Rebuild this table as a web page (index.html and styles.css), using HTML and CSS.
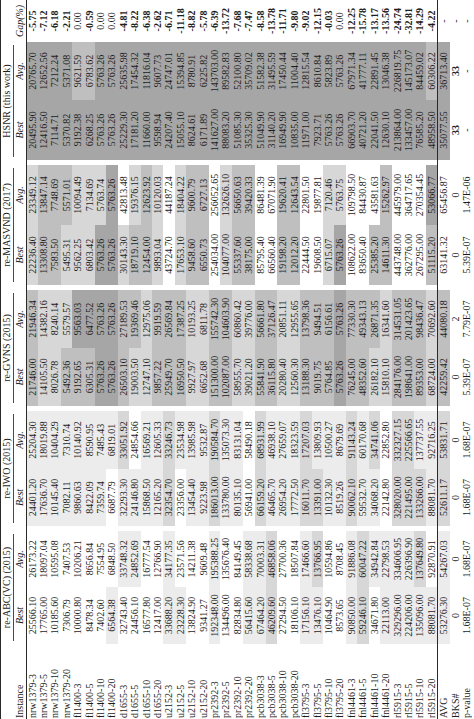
FILE: index.html
```html
<!DOCTYPE html>
<html lang="en">
<head>
<meta charset="utf-8">
<title>HSNR results table</title>
<link rel="stylesheet" href="styles.css">
</head>
<body>
<div class="page">
<div class="sheet">
<table class="res">
<colgroup>
<col class="w-inst"><col class="w57"><col class="w56"><col class="w62"><col class="w58"><col class="w63"><col class="w58"><col class="w65"><col class="w60"><col class="w65"><col class="w58"><col class="w42">
</colgroup>
<thead>
<tr class="h1"><th></th><th colspan="2"><div class="grp">re-ABC(VC) (2015)</div></th><th colspan="2" class="gs"><div class="grp">re-IWO (2015)</div></th><th colspan="2" class="gs"><div class="grp">re-GVNS (2015)</div></th><th colspan="2" class="gs"><div class="grp">re-MASVND (2017)</div></th><th colspan="2" class="gs"><div class="grp">HSNR (this work)</div></th><th></th></tr>
<tr class="h2"><th class="inst">Instance</th><th><i>Best</i></th><th><i>Avg.</i></th><th><i>Best</i></th><th><i>Avg.</i></th><th><i>Best</i></th><th><i>Avg.</i></th><th><i>Best</i></th><th><i>Avg.</i></th><th><i>Best</i></th><th><i>Avg.</i></th><th><i>Gap(%)</i></th></tr>
<tr class="rule"><td colspan="12"></td></tr>
</thead>
<tbody>
<tr class="rk"><td>nrw1379-3</td><td>25566.10</td><td>26173.22</td><td>24401.20</td><td>25204.30</td><td>21746.00</td><td>21946.34</td><td>22236.40</td><td>23349.12</td><td>20495.90</td><td>20765.70</td><td><b>-5.75</b></td></tr>
<tr class="rk"><td>nrw1379-5</td><td>17765.00</td><td>18097.04</td><td>17636.70</td><td>18019.88</td><td>14105.50</td><td>14382.16</td><td>13308.80</td><td>13847.14</td><td>12416.50</td><td>12652.56</td><td><b>-7.12</b></td></tr>
<tr class="rk"><td>nrw1379-10</td><td>10185.60</td><td>10595.08</td><td>10145.40</td><td>10404.29</td><td>8026.78</td><td>8240.14</td><td>7583.50</td><td>7748.69</td><td>7114.71</td><td>7212.24</td><td><b>-6.18</b></td></tr>
<tr class="rk"><td>nrw1379-20</td><td>7306.79</td><td>7407.53</td><td>7082.11</td><td>7310.74</td><td>5492.36</td><td>5579.57</td><td>5495.31</td><td>5571.01</td><td>5370.82</td><td>5371.08</td><td><b>-2.21</b></td></tr>
<tr class="rk"><td>fl1400-3</td><td>10000.80</td><td>10206.21</td><td>9860.63</td><td>10140.92</td><td>9192.65</td><td>9563.03</td><td>9562.25</td><td>10094.49</td><td>9192.38</td><td>9621.59</td><td>0.00</td></tr>
<tr class="rk"><td>fl1400-5</td><td>8478.34</td><td>8656.84</td><td>8422.09</td><td>8590.95</td><td>6305.31</td><td>6477.52</td><td>6803.42</td><td>7134.69</td><td>6268.25</td><td>6783.62</td><td><b>-0.59</b></td></tr>
<tr class="rk"><td>fl1400-10</td><td>7402.60</td><td>7554.95</td><td>7359.74</td><td>7485.43</td><td>5763.26</td><td>5763.26</td><td>5763.26</td><td>5763.74</td><td>5763.26</td><td>5763.26</td><td>0.00</td></tr>
<tr class="rk"><td>fl1400-20</td><td>6564.38</td><td>6848.50</td><td>6687.79</td><td>6819.01</td><td>5763.26</td><td>5763.26</td><td>5763.26</td><td>5763.26</td><td>5763.26</td><td>5763.26</td><td>0.00</td></tr>
<tr class="rk"><td>d1655-3</td><td>32743.40</td><td>33748.32</td><td>32293.30</td><td>33051.92</td><td>26503.10</td><td>27189.53</td><td>30143.30</td><td>42813.48</td><td>25229.30</td><td>25635.98</td><td><b>-4.81</b></td></tr>
<tr class="rk"><td>d1655-5</td><td>24456.10</td><td>24852.69</td><td>24146.80</td><td>24854.66</td><td>19003.50</td><td>19369.46</td><td>18719.10</td><td>19376.15</td><td>17181.20</td><td>17454.32</td><td><b>-8.22</b></td></tr>
<tr class="rk"><td>d1655-10</td><td>16577.80</td><td>16777.54</td><td>15868.50</td><td>16569.21</td><td>12747.10</td><td>12975.06</td><td>12454.00</td><td>12623.92</td><td>11660.00</td><td>11816.04</td><td><b>-6.38</b></td></tr>
<tr class="rk"><td>d1655-20</td><td>12417.00</td><td>12766.90</td><td>12165.20</td><td>12605.33</td><td>9857.22</td><td>9919.59</td><td>9893.04</td><td>10120.03</td><td>9598.94</td><td>9607.73</td><td><b>-2.62</b></td></tr>
<tr class="rk"><td>u2152-3</td><td>33688.20</td><td>34177.35</td><td>32354.70</td><td>33246.73</td><td>25949.70</td><td>26569.84</td><td>43724.70</td><td>44187.24</td><td>24207.40</td><td>24747.01</td><td><b>-6.71</b></td></tr>
<tr class="rk"><td>u2152-5</td><td>23228.30</td><td>23571.56</td><td>23356.00</td><td>23534.98</td><td>16950.50</td><td>17387.25</td><td>17653.10</td><td>18404.22</td><td>15055.10</td><td>15394.85</td><td><b>-11.18</b></td></tr>
<tr class="rk"><td>u2152-10</td><td>13824.90</td><td>14211.38</td><td>13454.40</td><td>13985.98</td><td>9927.97</td><td>10193.25</td><td>9458.60</td><td>9600.79</td><td>8624.61</td><td>8780.91</td><td><b>-8.82</b></td></tr>
<tr class="rk"><td>u2152-20</td><td>9341.27</td><td>9609.48</td><td>9223.98</td><td>9532.87</td><td>6652.68</td><td>6811.78</td><td>6550.73</td><td>6727.13</td><td>6171.89</td><td>6225.82</td><td><b>-5.78</b></td></tr>
<tr class="rk"><td>pr2392-3</td><td>192348.00</td><td>195388.25</td><td>186013.00</td><td>190584.70</td><td>151300.00</td><td>155742.30</td><td>254034.00</td><td>256052.65</td><td>141627.00</td><td>143703.00</td><td><b>-6.39</b></td></tr>
<tr class="rk"><td>pr2392-5</td><td>134496.00</td><td>135676.40</td><td>133780.00</td><td>135073.30</td><td>102087.00</td><td>104603.90</td><td>104077.00</td><td>132626.10</td><td>88083.20</td><td>89582.83</td><td><b>-13.72</b></td></tr>
<tr class="rk"><td>pr2392-10</td><td>82834.80</td><td>84149.45</td><td>80135.10</td><td>83131.04</td><td>58955.70</td><td>60860.42</td><td>55337.60</td><td>56650.63</td><td>51085.30</td><td>52100.80</td><td><b>-7.68</b></td></tr>
<tr class="rk"><td>pr2392-20</td><td>56415.60</td><td>58338.68</td><td>56941.00</td><td>58490.18</td><td>39021.20</td><td>39776.00</td><td>38175.00</td><td>39420.33</td><td>35325.30</td><td>35709.02</td><td><b>-7.47</b></td></tr>
<tr class="rk"><td>pcb3038-3</td><td>67464.20</td><td>70003.31</td><td>66159.20</td><td>68931.99</td><td>55841.90</td><td>56661.80</td><td>85795.40</td><td>86481.39</td><td>51049.90</td><td>51582.38</td><td><b>-8.58</b></td></tr>
<tr class="rk"><td>pcb3038-5</td><td>46209.60</td><td>46858.06</td><td>46465.70</td><td>46938.10</td><td>36115.80</td><td>37126.47</td><td>66560.40</td><td>67071.90</td><td>31140.20</td><td>31495.59</td><td><b>-13.78</b></td></tr>
<tr class="rk"><td>pcb3038-10</td><td>27294.50</td><td>27700.36</td><td>26954.20</td><td>27659.07</td><td>20280.40</td><td>20851.11</td><td>19198.20</td><td>19620.41</td><td>16949.90</td><td>17450.44</td><td><b>-11.71</b></td></tr>
<tr class="rk"><td>pcb3038-20</td><td>18106.10</td><td>18507.84</td><td>17772.50</td><td>18323.59</td><td>12560.30</td><td>12955.65</td><td>12012.20</td><td>12643.54</td><td>10835.00</td><td>11004.40</td><td><b>-9.80</b></td></tr>
<tr class="rk"><td>fl3795-3</td><td>17156.10</td><td>17466.60</td><td>16011.70</td><td>17207.03</td><td>13188.30</td><td>13798.36</td><td>22444.50</td><td>22801.50</td><td>11971.00</td><td>12815.54</td><td><b>-9.02</b></td></tr>
<tr class="rk"><td>fl3795-5</td><td>13476.10</td><td>13766.95</td><td>13391.00</td><td>13809.93</td><td>9019.75</td><td>9494.51</td><td>19608.50</td><td>19877.81</td><td>7923.71</td><td>8610.84</td><td><b>-12.15</b></td></tr>
<tr class="rk"><td>fl3795-10</td><td>10464.90</td><td>10594.86</td><td>10132.30</td><td>10500.27</td><td>5764.85</td><td>6156.61</td><td>6715.07</td><td>7120.46</td><td>5763.26</td><td>5823.89</td><td><b>-0.03</b></td></tr>
<tr class="rk"><td>fl3795-20</td><td>8573.65</td><td>8708.45</td><td>8519.26</td><td>8679.69</td><td>5763.26</td><td>5763.26</td><td>5763.26</td><td>5763.75</td><td>5763.26</td><td>5763.26</td><td>0.00</td></tr>
<tr class="rk"><td>fnl4461-3</td><td>90850.00</td><td>91886.08</td><td>90062.10</td><td>91143.24</td><td>76245.00</td><td>77330.30</td><td>108622.00</td><td>109798.50</td><td>66903.70</td><td>67971.34</td><td><b>-12.25</b></td></tr>
<tr class="rk"><td>fnl4461-5</td><td>59246.10</td><td>60047.22</td><td>59532.70</td><td>60170.68</td><td>48352.60</td><td>49343.13</td><td>83650.40</td><td>84430.87</td><td>40721.20</td><td>41777.11</td><td><b>-15.78</b></td></tr>
<tr class="rk"><td>fnl4461-10</td><td>34671.80</td><td>34942.84</td><td>34068.20</td><td>34741.06</td><td>26182.10</td><td>26871.35</td><td>25385.20</td><td>43581.63</td><td>22041.50</td><td>22891.45</td><td><b>-13.17</b></td></tr>
<tr class="rk"><td>fnl4461-20</td><td>22113.00</td><td>22798.53</td><td>22142.80</td><td>22852.80</td><td>15810.10</td><td>16341.60</td><td>14611.30</td><td>15262.97</td><td>12630.10</td><td>13046.38</td><td><b>-13.56</b></td></tr>
<tr class="rk"><td>rl5915-3</td><td>329296.00</td><td>334606.95</td><td>328020.00</td><td>332327.15</td><td>284176.00</td><td>314531.05</td><td>443748.00</td><td>445979.00</td><td>213864.00</td><td>226819.75</td><td><b>-24.74</b></td></tr>
<tr class="rk"><td>rl5915-5</td><td>224206.00</td><td>226396.90</td><td>221495.00</td><td>225566.65</td><td>198641.00</td><td>201423.65</td><td>362776.00</td><td>364717.65</td><td>133457.00</td><td>145173.07</td><td><b>-32.81</b></td></tr>
<tr class="rk"><td>rl5915-10</td><td>135096.00</td><td>137649.80</td><td>133266.00</td><td>137737.55</td><td>89353.00</td><td>98436.47</td><td>267295.00</td><td>270354.45</td><td>76585.20</td><td>84459.02</td><td><b>-14.29</b></td></tr>
<tr class="rk"><td>rl5915-20</td><td>88081.70</td><td>92870.91</td><td>88081.70</td><td>92716.25</td><td>68724.00</td><td>70692.60</td><td>51115.20</td><td>53066.77</td><td>48958.50</td><td>60306.22</td><td><b>-4.22</b></td></tr>
<tr class="rule"><td colspan="12"></td></tr>
<tr class="rk"><td>AVG</td><td>53276.30</td><td>54267.03</td><td>52611.17</td><td>53831.71</td><td>42259.42</td><td>44080.18</td><td>63141.32</td><td>65456.87</td><td>35077.55</td><td>36713.40</td><td>-</td></tr>
<tr><td>BKS#</td><td>0</td><td>0</td><td>0</td><td>0</td><td>0</td><td>2</td><td>0</td><td>0</td><td><b>33</b></td><td><b>33</b></td><td>-</td></tr>
<tr><td>p-value</td><td>1.68E-07</td><td>1.68E-07</td><td>1.68E-07</td><td>1.68E-07</td><td>5.39E-07</td><td>7.79E-07</td><td>5.39E-07</td><td>1.47E-06</td><td>-</td><td>-</td><td>-</td></tr>
</tbody>
</table>
</div>
</div>
<script src="script.js"></script>
</body>
</html>
```

FILE: styles.css
```css
html, body {
  margin: 0;
  padding: 0;
  background: #ffffff;
}

.page {
  width: 474px;
  height: 719px;
  overflow: hidden;
}

/* the table is printed on a landscape sheet, turned a quarter to the left */
.sheet {
  width: 719px;
  height: 474px;
  background: #ffffff;
  transform-origin: 0 0;
  transform: translateY(719px) rotate(-90deg);
}

.res {
  width: 719px;
  table-layout: fixed;
  border-collapse: separate;
  border-spacing: 0;
  border-top: 1px solid #2a2a2a;
  font-family: "Liberation Serif", "DejaVu Serif", serif;
  font-size: 10px;
  color: #1c1c1c;
}

.w-inst { width: 75px; }
.w42 { width: 42px; }
.w56 { width: 56px; }
.w57 { width: 57px; }
.w58 { width: 58px; }
.w60 { width: 60px; }
.w62 { width: 62px; }
.w63 { width: 63px; }
.w65 { width: 65px; }

.res th,
.res td {
  padding: 0;
  height: 11.4px;
  line-height: 11.4px;
  text-align: center;
  font-weight: normal;
  white-space: nowrap;
  overflow: hidden;
}

.res b {
  font-weight: bold;
}

.res td:first-child,
.res th.inst {
  text-align: left;
  padding-left: 1px;
}

/* white gap that separates the method groups */
.res tbody td:nth-child(2n+4):not(:last-child),
.res .h2 th:nth-child(2n+4):not(:last-child),
.res .h1 th.gs {
  border-left: 5px solid #ffffff;
}

.h1 th {
  height: 12.5px;
  line-height: 11.5px;
  vertical-align: top;
}

.grp {
  margin: 0 3px;
  line-height: 11.5px;
  border-bottom: 1px solid #4a4a4a;
}

.h2 th {
  height: 12px;
  line-height: 12px;
}

.res tr.rule td {
  height: 1px;
  padding: 0;
  line-height: 0;
  font-size: 0;
  background: #2a2a2a;
}

/* rank shading: darker = better within the row */
.r1 { background: #a6a6a6; }
.r2 { background: #bfbfbf; }
.r3 { background: #d7d7d7; }
.r4 { background: #ececec; }
.r5 { background: transparent; }
```

FILE: script.js
```js
document.querySelectorAll('.res tr.rk').forEach(function (tr) {
  var cells = tr.querySelectorAll('td');
  [1, 2].forEach(function (off) {
    var group = [];
    for (var i = off; i <= 10; i += 2) group.push(cells[i]);
    var vals = group.map(function (c) { return parseFloat(c.textContent); });
    group.forEach(function (c, k) {
      var r = 1;
      vals.forEach(function (v) { if (v < vals[k]) r++; });
      c.classList.add('r' + r);
    });
  });
});
```
